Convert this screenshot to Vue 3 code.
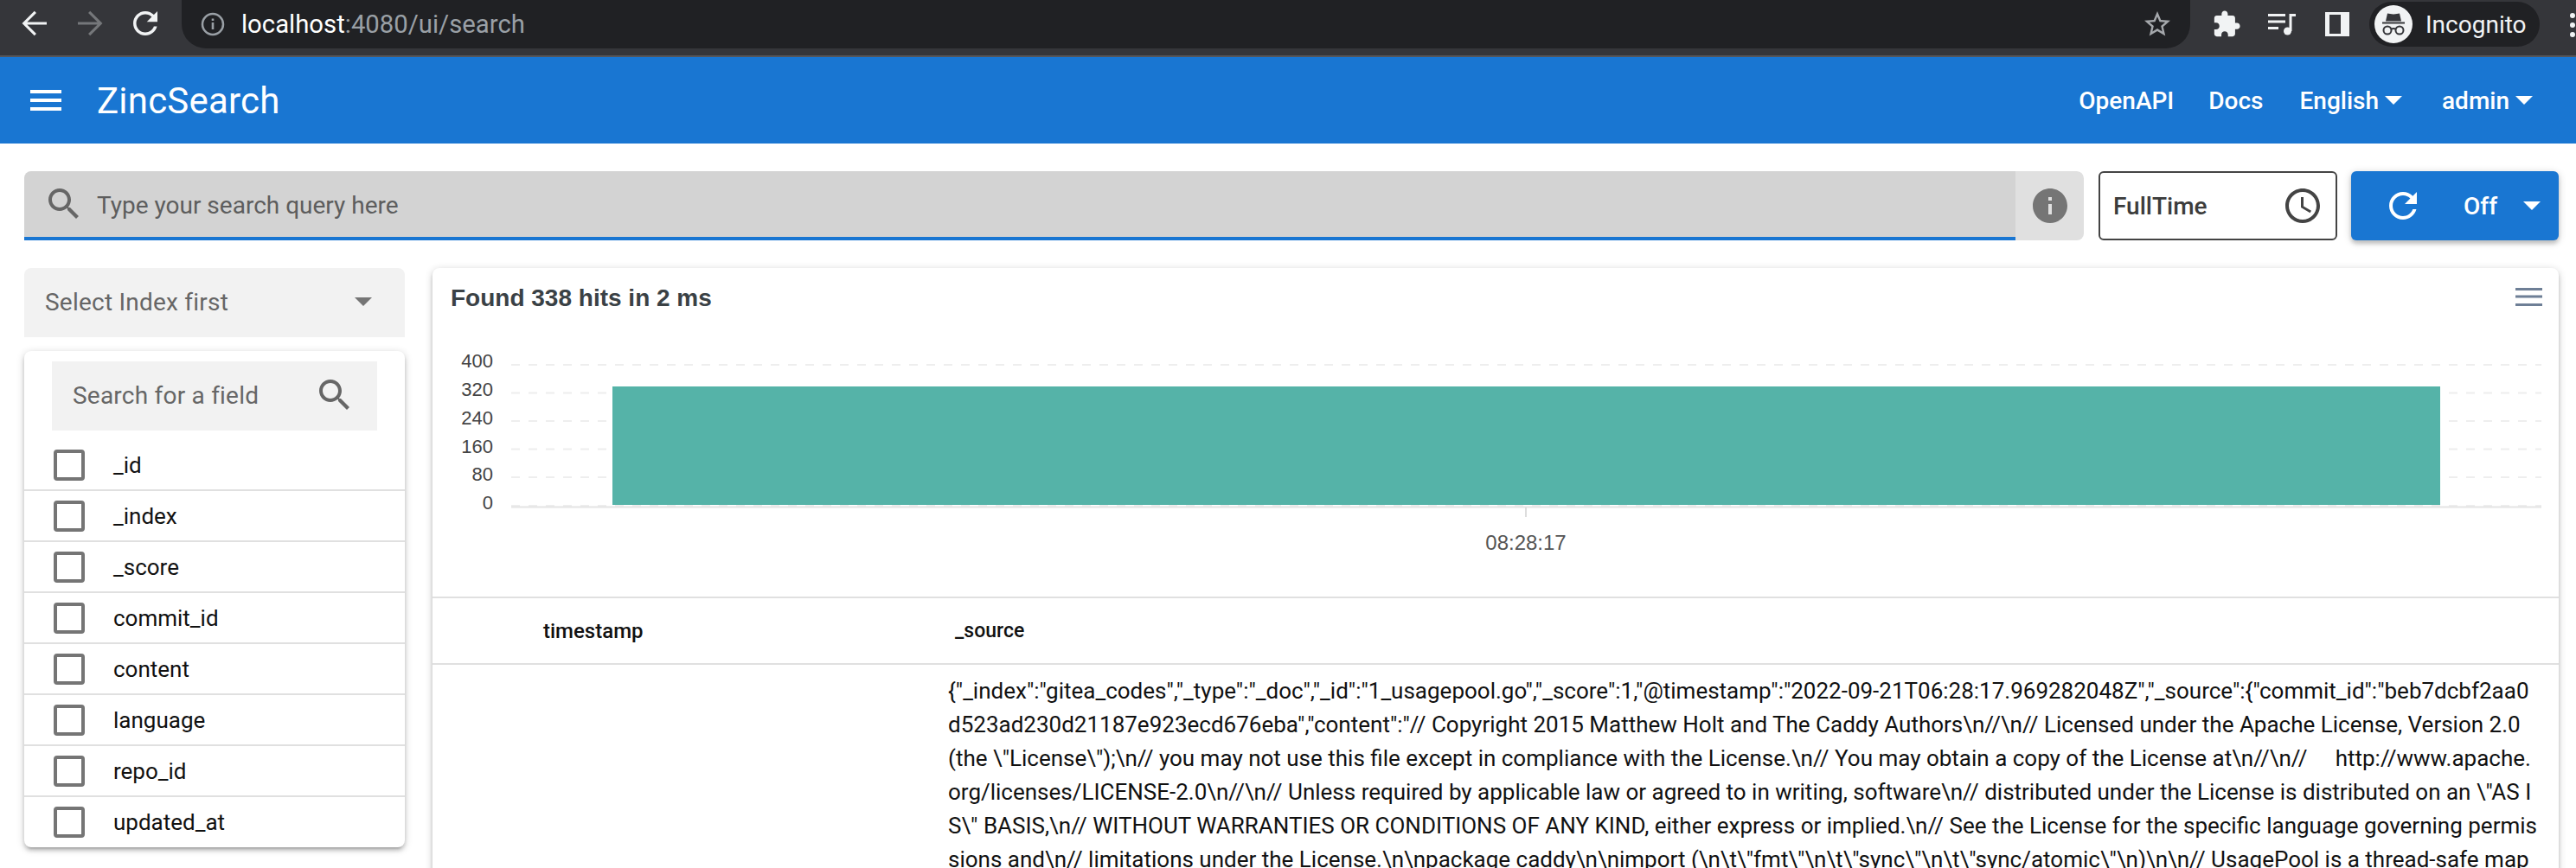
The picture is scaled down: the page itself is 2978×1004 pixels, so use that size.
<script setup>
const fields = ['_id', '_index', '_score', 'commit_id', 'content', 'language', 'repo_id', 'updated_at']
const ticks = [
  { label: '400', line: 22, text: 25 },
  { label: '320', line: 54.5, text: 58 },
  { label: '240', line: 87, text: 91 },
  { label: '160', line: 119.5, text: 124 },
  { label: '80', line: 152, text: 156 },
  { label: '0', line: 185, text: 189 }
]
const source = String.raw`{"_index":"gitea_codes","_type":"_doc","_id":"1_usagepool.go","_score":1,"@timestamp":"2022-09-21T06:28:17.969282048Z","_source":{"commit_id":"beb7dcbf2aa0d523ad230d21187e923ecd676eba","content":"// Copyright 2015 Matthew Holt and The Caddy Authors\n//\n// Licensed under the Apache License, Version 2.0 (the \"License\");\n// you may not use this file except in compliance with the License.\n// You may obtain a copy of the License at\n//\n//     http://www.apache.org/licenses/LICENSE-2.0\n//\n// Unless required by applicable law or agreed to in writing, software\n// distributed under the License is distributed on an \"AS IS\" BASIS,\n// WITHOUT WARRANTIES OR CONDITIONS OF ANY KIND, either express or implied.\n// See the License for the specific language governing permissions and\n// limitations under the License.\n\npackage caddy\n\nimport (\n\t\"fmt\"\n\t\"sync\"\n\t\"sync/atomic\"\n)\n\n// UsagePool is a thread-safe map`
</script>

<template>
  <div class="page">
    <header class="chrome">
      <svg class="nav-icon" viewBox="0 0 24 24"><path d="M20 12H5M12.5 4.5 5 12l7.5 7.5" fill="none" stroke="#f1f3f4" stroke-width="1.8" /></svg>
      <svg class="nav-icon" viewBox="0 0 24 24"><path d="M4 12h15M11.5 4.5 19 12l-7.500 7.500" fill="none" stroke="#75777a" stroke-width="1.8" /></svg>
      <svg class="nav-icon" viewBox="0 0 24 24"><path fill="#f1f3f4" d="M17.650 6.350C16.200 4.900 14.210 4 12 4c-4.420 0-7.990 3.580-7.990 8s3.570 8 7.990 8c3.730 0 6.840-2.550 7.730-6h-2.080c-.82 2.330-3.040 4-5.650 4-3.310 0-6-2.690-6-6s2.690-6 6-6c1.660 0 3.140.69 4.220 1.780L13 11h7V4l-2.350 2.350z" /></svg>
      <div class="address">
        <svg class="url-info" viewBox="0 0 28 28"><circle cx="14" cy="14" r="12" fill="none" stroke="#9aa0a6" stroke-width="2.500" /><path d="M12.700 12h2.600v8h-2.600zM12.700 7.500h2.600v2.600h-2.600z" fill="#9aa0a6" /></svg>
        <span class="url"><span class="url-host">localhost</span>:4080/ui/search</span>
        <svg class="star" viewBox="0 0 24 24"><path fill="#a5a8ac" d="M22 9.240l-7.190-.62L12 2 9.190 8.630 2 9.240l5.460 4.730L5.820 21 12 17.270 18.180 21l-1.630-7.030L22 9.240zM12 15.400l-3.760 2.270 1-4.280-3.320-2.880 4.380-.38L12 6.100l1.710 4.040 4.380.38-3.320 2.880 1 4.280L12 15.400z" /></svg>
      </div>
      <svg class="puzzle" viewBox="0 0 24 24"><path fill="#f1f3f4" d="M20.500 11H19V7c0-1.100-.9-2-2-2h-4V3.500C13 2.120 11.880 1 10.500 1S8 2.120 8 3.500V5H4c-1.100 0-1.990.9-1.990 2v3.800H3.500c1.490 0 2.700 1.210 2.700 2.700s-1.210 2.700-2.700 2.700H2V20c0 1.100.9 2 2 2h3.800v-1.500c0-1.490 1.210-2.700 2.700-2.700 1.490 0 2.700 1.210 2.700 2.700V22H17c1.100 0 2-.9 2-2v-4h1.500c1.380 0 2.500-1.120 2.500-2.500S21.880 11 20.500 11z" /></svg>
      <svg class="queue" viewBox="0 0 32 26"><path fill="#f1f3f4" d="M0 1h20v3H0zM0 8.500h20v3H0zM0 16h12v3H0z" /><path d="M26 21V2.500h6" fill="none" stroke="#f1f3f4" stroke-width="3" /><circle cx="22.500" cy="21" r="4.500" fill="#f1f3f4" /></svg>
      <svg class="panel-icon" viewBox="0 0 28 28"><path fill="#f1f3f4" fill-rule="evenodd" d="M0 0h28v28H0zM5 3v22h13V3z" /></svg>
      <div class="profile">
        <svg class="avatar" viewBox="0 0 44 44"><circle cx="22" cy="22" r="22" fill="#f1f3f4" /><path fill="#35363a" d="M15 9.500c2 0 4 1 7 1s5-1 7-1l2 9H13z" /><path fill="#35363a" d="M9 19.500h26v2H9z" /><circle cx="15" cy="29" r="4.500" fill="none" stroke="#35363a" stroke-width="2" /><circle cx="29" cy="29" r="4.500" fill="none" stroke="#35363a" stroke-width="2" /><path fill="none" stroke="#35363a" stroke-width="2" d="M19 28c2-1.200 4-1.200 6 0" /></svg>
        <span class="profile-name">Incognito</span>
      </div>
      <div class="kebab"><i></i><i></i><i></i></div>
    </header>

    <nav class="toolbar">
      <svg class="menu" viewBox="0 0 24 24"><path fill="#fff" d="M3 18h18v-2H3v2zm0-5h18v-2H3v2zm0-7v2h18V6H3z" /></svg>
      <div class="brand">ZincSearch</div>
      <a class="nav-link">OpenAPI</a>
      <a class="nav-link docs">Docs</a>
      <a class="nav-link drop">English<svg class="caret" viewBox="7 10 10 5"><path fill="#fff" d="M7 10l5 5 5-5z" /></svg></a>
      <a class="nav-link drop last">admin<svg class="caret" viewBox="7 10 10 5"><path fill="#fff" d="M7 10l5 5 5-5z" /></svg></a>
    </nav>

    <main class="content">
      <section class="query-row">
        <div class="query">
          <div class="query-input">
            <svg class="icon-48" viewBox="0 0 24 24"><path fill="#666" d="M15.500 14h-.79l-.28-.27C15.410 12.590 16 11.110 16 9.500 16 5.910 13.090 3 9.500 3S3 5.910 3 9.500 5.910 16 9.500 16c1.610 0 3.090-.59 4.230-1.570l.27.28v.79l5 4.990L20.490 19l-4.990-5zm-6 0C7.010 14 5 11.990 5 9.500S7.010 5 9.500 5 14 7.010 14 9.500 11.990 14 9.500 14z" /></svg>
            <span class="query-placeholder">Type your search query here</span>
          </div>
          <div class="query-info">
            <svg class="icon-48" viewBox="0 0 24 24"><path fill="#757575" d="M12 2C6.480 2 2 6.480 2 12s4.480 10 10 10 10-4.480 10-10S17.520 2 12 2zm1 15h-2v-6h2v6zm0-8h-2V7h2v2z" /></svg>
          </div>
        </div>
        <div class="time-box">
          <span>FullTime</span>
          <svg class="icon-48" viewBox="0 0 24 24"><path fill="#444" d="M11.990 2C6.470 2 2 6.480 2 12s4.470 10 9.990 10C17.520 22 22 17.520 22 12S17.520 2 11.990 2zM12 20c-4.420 0-8-3.580-8-8s3.580-8 8-8 8 3.580 8 8-3.580 8-8 8zm.5-13H11v6l5.250 3.150.75-1.230-4.500-2.670z" /></svg>
        </div>
        <div class="refresh">
          <svg class="icon-48" viewBox="0 0 24 24"><path fill="#fff" d="M17.650 6.350C16.200 4.900 14.210 4 12 4c-4.420 0-7.990 3.580-7.990 8s3.570 8 7.990 8c3.730 0 6.840-2.550 7.730-6h-2.080c-.82 2.330-3.040 4-5.650 4-3.310 0-6-2.690-6-6s2.690-6 6-6c1.660 0 3.140.69 4.220 1.780L13 11h7V4l-2.350 2.350z" /></svg>
          <span class="refresh-label">Off</span>
          <svg class="caret refresh-caret" viewBox="7 10 10 5"><path fill="#fff" d="M7 10l5 5 5-5z" /></svg>
        </div>
      </section>

      <section class="columns">
        <aside class="side">
          <div class="index-select">
            <span>Select Index first</span>
            <svg class="caret" viewBox="7 10 10 5"><path fill="#757575" d="M7 10l5 5 5-5z" /></svg>
          </div>
          <div class="field-panel">
            <div class="field-search">
              <span>Search for a field</span>
              <svg class="icon-48" viewBox="0 0 24 24"><path fill="#666" d="M15.500 14h-.79l-.28-.27C15.410 12.590 16 11.110 16 9.500 16 5.910 13.090 3 9.500 3S3 5.910 3 9.500 5.910 16 9.500 16c1.610 0 3.090-.59 4.230-1.570l.27.28v.79l5 4.990L20.490 19l-4.990-5zm-6 0C7.010 14 5 11.990 5 9.500S7.010 5 9.500 5 14 7.010 14 9.500 11.990 14 9.500 14z" /></svg>
            </div>
            <ul class="field-list">
              <li v-for="field in fields" :key="field" class="field-row">
                <span class="check"></span>
                <span class="field-name">{{ field }}</span>
              </li>
            </ul>
          </div>
        </aside>

        <article class="card">
          <div class="card-head">
            <h2 class="hits">Found 338 hits in 2 ms</h2>
            <svg class="chart-menu" viewBox="0 0 31 21"><path fill="#6e7f96" d="M0 0h31v3H0zM0 8.500h31v3H0zM0 18h31v3H0z" /></svg>
          </div>
          <svg class="chart" viewBox="0 0 2458 290">
            <g v-for="t in ticks" :key="t.label">
              <line x1="91" x2="2438" :y1="t.line" :y2="t.line" stroke="#eee" stroke-width="2" stroke-dasharray="10 10" />
              <text x="70" :y="t.text" text-anchor="end" class="axis">{{ t.label }}</text>
            </g>
            <rect x="208" y="47" width="2113" height="137" fill="#52b1a6" fill-opacity="0.98" />
            <line x1="91" x2="2438" y1="186.500" y2="186.500" stroke="#e4e4e4" stroke-width="2" />
            <line x1="1264" x2="1264" y1="187" y2="198" stroke="#ddd" stroke-width="2" />
            <text x="1264" y="236" text-anchor="middle" class="axis time">08:28:17</text>
          </svg>
          <div class="table-head">
            <span class="th-time">timestamp</span>
            <span class="th-source">_source</span>
          </div>
          <div class="table-row">
            <div class="td-time"></div>
            <div class="td-source">{{ source }}</div>
          </div>
        </article>
      </section>
    </main>
  </div>
</template>

<style>
html, body { margin: 0; overflow: hidden; background: #fff; }
</style>

<style scoped>
.page { width: 2978px; height: 1004px; overflow: hidden; font-family: Roboto, "Liberation Sans", sans-serif; color: #111; }

.chrome { height: 64px; border-bottom: 2px solid #55565a; background: #35363a; display: flex; align-items: flex-start; padding-left: 19px; overflow: hidden; }
.nav-icon { width: 42px; height: 42px; margin-top: 6px; margin-right: 22px; flex: none; }
.address { width: 2322px; height: 56px; margin-left: -1px; background: #202124; border-radius: 0 0 28px 28px; display: flex; align-items: center; padding: 0 20px 0 22px; box-sizing: border-box; flex: none; }
.url-info { width: 28px; height: 28px; flex: none; }
.url { margin-left: 19px; font-size: 29.300px; color: #9aa0a6; flex: 1; white-space: nowrap; }
.url-host { color: #fff; }
.star { width: 36px; height: 36px; flex: none; }
.puzzle { width: 34px; height: 34px; margin: 11px 0 0 25px; flex: none; }
.queue { width: 32px; height: 26px; margin: 15px 0 0 31px; flex: none; }
.panel-icon { width: 28px; height: 28px; margin: 14px 0 0 34px; flex: none; }
.profile { width: 197px; height: 52px; margin: 2px 0 0 23px; flex: none; background: #202124; border-radius: 26px; display: flex; align-items: center; padding-left: 6px; box-sizing: border-box; }
.avatar { width: 44px; height: 44px; flex: none; }
.profile-name { margin-left: 15px; color: #f1f3f4; font-size: 28px; }
.kebab { margin: 15px 0 0 35px; display: flex; flex-direction: column; gap: 5px; flex: none; }
.kebab i { display: block; width: 6px; height: 6px; border-radius: 50%; background: #f1f3f4; }

.toolbar { height: 100px; background: #1976d2; color: #fff; display: flex; align-items: center; padding: 0 50px 0 30px; }
.menu { width: 48px; height: 48px; flex: none; margin-left: -1px; }
.brand { font-size: 42px; letter-spacing: .2px; margin-left: 35px; flex: 1; }
.nav-link { font-size: 28px; font-weight: 500; margin-left: 42px; display: flex; align-items: center; }
.nav-link.docs { margin-left: 40px; }
.nav-link.last { margin-left: 46px; }
.caret { width: 20px; height: 10px; margin-left: 7px; flex: none; }

.content { padding: 32px 20px 0 28px; }
.query-row { display: flex; height: 80px; }
.query { flex: 1; display: flex; border-radius: 8px 8px 0 0; overflow: hidden; }
.query-input { flex: 1; background: #d3d3d3; border-bottom: 4px solid #1976d2; display: flex; align-items: center; padding-left: 22px; }
.icon-48 { width: 48px; height: 48px; flex: none; }
.query-placeholder { margin-left: 14px; font-size: 28px; padding-top: 2px; color: #5d5d5d; }
.query-info { width: 79px; background: #e0e0e0; display: flex; align-items: center; justify-content: center; border-radius: 0 8px 8px 0; }
.time-box { width: 276px; margin-left: 17px; border: 2px solid #444; border-radius: 6px; box-sizing: border-box; display: flex; align-items: center; justify-content: space-between; padding: 0 14px 0 15px; font-size: 28px; font-weight: 500; color: #3c3c3c; }
.refresh { width: 240px; margin-left: 16px; background: #1976d2; border-radius: 6px; color: #fff; display: flex; align-items: center; padding-left: 36px; box-sizing: border-box; font-size: 28px; font-weight: 500; box-shadow: 0 2px 10px rgba(0,0,0,.2), 0 4px 4px rgba(0,0,0,.14); }
.refresh-label { margin-left: 46px; }
.refresh-caret { margin-left: 30px; }

.columns { display: flex; gap: 32px; margin-top: 32px; align-items: flex-start; }
.side { width: 440px; flex: none; }
.index-select { height: 80px; box-sizing: border-box; background: #f2f2f2; border-radius: 8px 8px 0 0; display: flex; align-items: center; justify-content: space-between; padding: 0 38px 2px 24px; font-size: 28px; letter-spacing: .22px; color: #666; }
.field-panel { margin-top: 16px; background: #fff; border-radius: 8px; box-shadow: 0 2px 10px rgba(0,0,0,.2), 0 4px 4px rgba(0,0,0,.14), 0 6px 2px -4px rgba(0,0,0,.12); padding-top: 12px; }
.field-search { height: 80px; margin: 0 32px; background: #f2f2f2; display: flex; align-items: center; justify-content: space-between; padding: 0 25px 2px 24px; box-sizing: border-box; font-size: 28px; letter-spacing: .22px; color: #666; }
.field-list { list-style: none; margin: 11px 0 0; padding: 0; }
.field-row { height: 59px; box-sizing: border-box; border-bottom: 2px solid #e0e0e0; display: flex; align-items: center; padding-left: 34px; }
.field-row:last-child { border-bottom: 0; height: 58px; }
.check { width: 36px; height: 36px; border: 4px solid #757575; border-radius: 4px; box-sizing: border-box; flex: none; }
.field-name { margin-left: 33px; font-size: 26px; color: #111; }

.card { flex: 1; min-width: 0; height: 800px; background: #fff; border-radius: 8px 8px 0 0; box-shadow: 0 2px 10px rgba(0,0,0,.2), 0 4px 4px rgba(0,0,0,.14); }
.card-head { height: 90px; box-sizing: border-box; display: flex; justify-content: space-between; align-items: flex-start; padding: 17px 19px 0 21px; }
.hits { margin: 0; font-family: "Liberation Sans", Arial, sans-serif; font-size: 28px; line-height: 36px; font-weight: 700; color: #3a4145; }
.chart-menu { width: 31px; height: 21px; margin-top: 6px; }
.chart { display: block; width: 2458px; height: 290px; border-bottom: 2px solid #e0e0e0; }
.axis { font-family: "Liberation Sans", Arial, sans-serif; font-size: 22px; fill: #444; }
.axis.time { font-size: 24px; fill: #555; }
.table-head { height: 75px; border-bottom: 2px solid #e0e0e0; display: flex; align-items: center; font-size: 24px; font-weight: 500; color: #111; }
.th-time { margin-left: 128px; width: 476px; }
.th-source { font-size: 23px; }
.table-row { display: flex; padding-top: 11px; }
.td-time { width: 596px; flex: none; }
.td-source { flex: 1; padding-right: 21px; font-size: 26px; line-height: 39px; color: #111; white-space: pre-wrap; word-break: break-all; }
</style>
